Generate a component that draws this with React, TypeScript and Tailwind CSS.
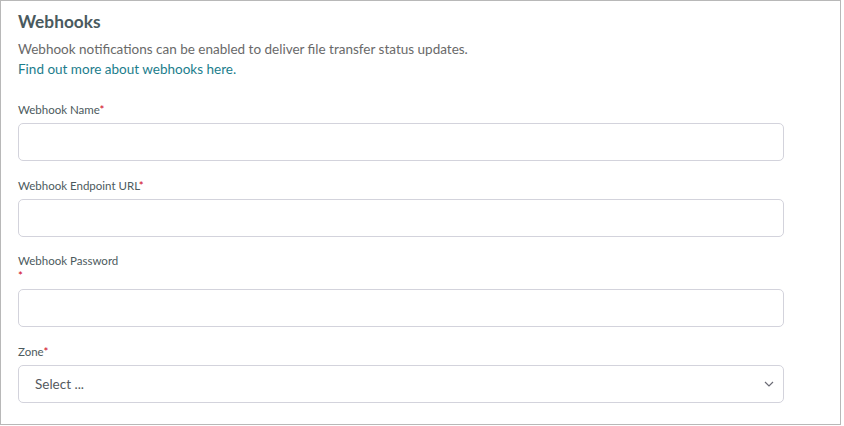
import React from 'react';

const inputClass =
  'block w-full h-[38px] rounded-[5px] border border-[#d3d3dc] bg-white px-4 text-[13.5px] text-[#4b5558] outline-none';

const Field: React.FC<{ label: string; breakStar?: boolean; children: React.ReactNode }> = ({ label, breakStar, children }) => (
  <div className="mt-[17px]">
    {breakStar ? (
      <label className="block text-[11.5px] text-[#4c5a5d]">
        <span className="block leading-[14px]">{label}</span>
        <span className="block text-[#d0021b] leading-[16px]">*</span>
      </label>
    ) : (
      <label className="block text-[11.5px] leading-[16px] text-[#4c5a5d]">
        {label}
        <span className="text-[#d0021b]">*</span>
      </label>
    )}
    <div className="mt-[5px]">{children}</div>
  </div>
);

export default function App() {
  return (
    <div className="w-[844px] h-[426px] bg-white pr-[3px] pb-[1px] font-['Lato',sans-serif]">
      <div className="h-full border border-[#b8b8b8] px-[17px] pt-[9px]">
        <h2 className="text-[17.3px] leading-[24px] font-bold text-[#4a5a5e]">Webhooks</h2>
        <p className="mt-[5px] text-[13.5px] leading-[20px] text-[#696969]">
          Webhook notifications can be enabled to deliver file transfer status updates.
        </p>
        <a href="#" className="block text-[13.5px] leading-[20px] text-[#1b7d8c]">
          Find out more about webhooks here.
        </a>
        <form className="w-[766px] pt-[6px]">
          <Field label="Webhook Name">
            <input type="text" className={inputClass} />
          </Field>
          <Field label="Webhook Endpoint URL">
            <input type="text" className={inputClass} />
          </Field>
          <Field label="Webhook Password" breakStar>
            <input type="password" className={inputClass} />
          </Field>
          <Field label="Zone">
            <div className={inputClass + ' flex items-center justify-between'}>
              <span className="text-[#555a5e]">Select ...</span>
              <svg width="10" height="6" viewBox="0 0 10 6" fill="none" className="mr-[-7px]">
                <path d="M1 1l4 4 4-4" stroke="#6b6b75" strokeWidth="1.2" />
              </svg>
            </div>
          </Field>
        </form>
      </div>
    </div>
  );
}
